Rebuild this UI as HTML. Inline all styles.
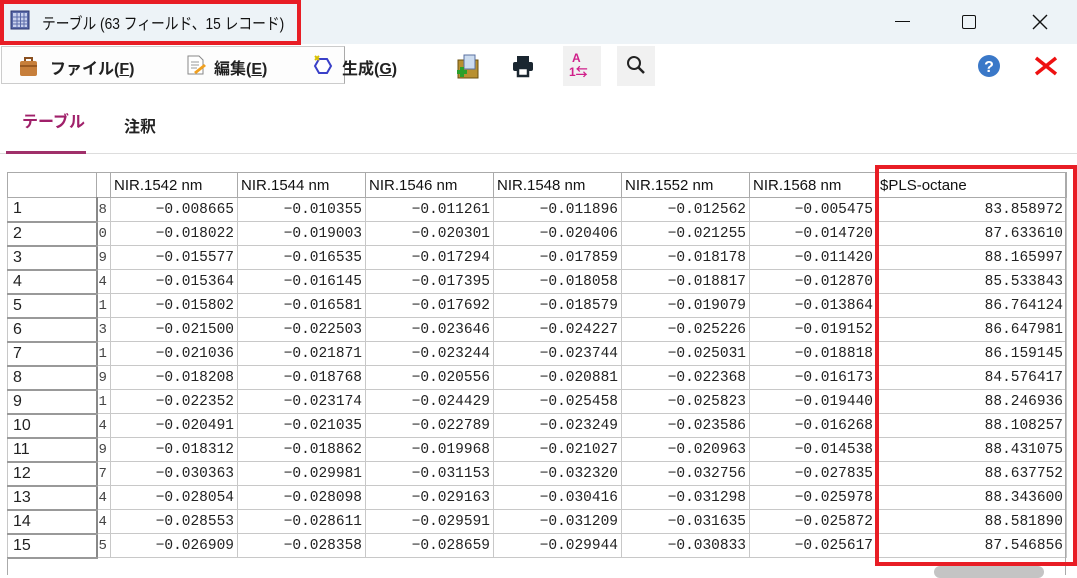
<!DOCTYPE html>
<html><head><meta charset="utf-8"><style>
*{margin:0;padding:0;box-sizing:border-box}
body{width:1077px;height:575px;overflow:hidden;background:#fff;position:relative;font-family:"Liberation Sans","Noto Sans CJK JP",sans-serif}
.title{position:absolute;left:0;top:0;width:1077px;height:44px;background:#edf3f7}
.abs{position:absolute}
table{position:absolute;left:7px;top:172px;border-collapse:collapse;table-layout:fixed}
td{border:1px solid #c8c8c8;height:24px;font-family:"Liberation Mono",monospace;font-size:14.5px;color:#222;text-align:right;padding:0 3px;white-space:nowrap;overflow:hidden}
tr.h td{height:25px;font-family:"Liberation Sans",sans-serif;font-size:15px;text-align:left;color:#111;border-color:#aaa;padding:0 3px}
td.l{text-align:left;font-family:"Liberation Sans",sans-serif;font-size:16px;border-right:2px solid #888;border-bottom:2px solid #999;padding-left:5px}
td.s{text-align:left;padding:0 1px;font-size:14px;color:#444}
.rb{position:absolute;border:4px solid #e81d25}
</style></head><body>
<div class="title"></div>
<svg class="abs" style="left:10px;top:10px" width="20" height="20"><rect x="1" y="1" width="18" height="18" fill="#5a6aa8" stroke="#2b3470"/><rect x="3" y="3" width="14" height="14" fill="#c9d1ee"/><path d="M3 7H17M3 11H17M3 14H17M7 3V17M10.5 3V17M14 3V17" stroke="#5a6aa8"/></svg>
<div class="abs" style="left:42px;top:10px;font-size:16px;color:#111;transform:scaleX(0.86);transform-origin:0 0;white-space:nowrap">テーブル (63 フィールド、15 レコード)</div>
<div class="rb" style="left:0;top:0;width:301px;height:45px"></div>
<div class="abs" style="left:895px;top:21px;width:15px;height:1px;background:#111"></div>
<div class="abs" style="left:962px;top:15px;width:14px;height:14px;border:1.5px solid #111;border-radius:2px"></div>
<svg class="abs" style="left:1032px;top:14px" width="16" height="16"><path d="M1 1L15 15M15 1L1 15" stroke="#111" stroke-width="1.4"/></svg>
<div class="abs" style="left:1px;top:46px;width:344px;height:38px;border:1px solid #ccc;border-right-color:#aaa;background:#fdfdfd"></div>
<svg class="abs" style="left:17px;top:54px" width="24" height="24"><rect x="3" y="7" width="17" height="15" rx="2" fill="#c77f3b"/><path d="M8 7V4H15V7" stroke="#8a5020" fill="none" stroke-width="2"/><rect x="3" y="11" width="17" height="2" fill="#9a5a22"/></svg>
<div class="abs" style="left:50px;top:55px;font-size:16px;font-weight:bold;color:#222">ファイル(<u>F</u>)</div>
<svg class="abs" style="left:184px;top:53px" width="24" height="24"><path d="M4 3H15L19 7V21H4Z" fill="#fff" stroke="#888"/><path d="M7 9H15M7 12H15M7 15H13" stroke="#999"/><path d="M10 19L20 11L22 13L12 21Z" fill="#f0a020"/></svg>
<div class="abs" style="left:214px;top:55px;font-size:16px;font-weight:bold;color:#222">編集(<u>E</u>)</div>
<svg class="abs" style="left:311px;top:53px" width="24" height="24"><path d="M8 6H16L20 13L16 20H8L4 13Z" fill="#fff" stroke="#3a40c8" stroke-width="2"/><path d="M4 3L8 7M8 3L4 7" stroke="#d8c000" stroke-width="2"/></svg>
<div class="abs" style="left:342px;top:55px;font-size:16px;font-weight:bold;color:#222">生成(<u>G</u>)</div>
<svg class="abs" style="left:456px;top:54px" width="24" height="26"><rect x="2" y="6" width="20" height="18" fill="#b89030" stroke="#6a5010"/><rect x="8" y="1" width="11" height="14" fill="#ccdcf0" stroke="#5a70a0"/><path d="M6 13V23M1 18H11" stroke="#2aa02a" stroke-width="4"/></svg>
<svg class="abs" style="left:511px;top:54px" width="24" height="24"><rect x="6" y="2" width="12" height="6" fill="#1a2630"/><rect x="2" y="8" width="20" height="9" rx="2" fill="#1a2630"/><rect x="7" y="14" width="10" height="8" fill="#fff" stroke="#1a2630" stroke-width="2.5"/></svg>
<div class="abs" style="left:563px;top:46px;width:38px;height:40px;background:#f1f1f1"></div>
<div class="abs" style="left:572px;top:51px;font-size:12px;font-weight:bold;color:#d0208a">A</div>
<div class="abs" style="left:569px;top:63px;font-size:12px;font-weight:bold;color:#d0208a">1⇆</div>
<div class="abs" style="left:617px;top:46px;width:38px;height:40px;background:#f1f1f1"></div>
<svg class="abs" style="left:625px;top:54px" width="24" height="24"><circle cx="9" cy="9" r="6" fill="none" stroke="#222" stroke-width="2"/><path d="M13 13L19 19" stroke="#222" stroke-width="2.5"/></svg>
<svg class="abs" style="left:977px;top:54px" width="24" height="24"><circle cx="12" cy="12" r="11" fill="#3a78c8"/><text x="12" y="18" font-size="16" font-weight="bold" fill="#fff" text-anchor="middle" font-family="Liberation Sans">?</text></svg>
<svg class="abs" style="left:1034px;top:56px" width="24" height="20"><path d="M2 2L22 18M22 2L2 18" stroke="#ee1111" stroke-width="3.5"/></svg>
<div class="abs" style="left:22px;top:108px;font-size:16px;font-weight:bold;color:#a0206a">テーブル</div>
<div class="abs" style="left:124px;top:113px;font-size:16px;font-weight:bold;color:#222">注釈</div>
<div class="abs" style="left:0;top:153px;width:1077px;height:1px;background:#ddd"></div>
<div class="abs" style="left:6px;top:151px;width:80px;height:3px;background:#a0306a"></div>
<table>
<colgroup><col style="width:89px"><col style="width:14px"><col style="width:127px"><col style="width:128px"><col style="width:128px"><col style="width:128px"><col style="width:128px"><col style="width:127px"><col style="width:190px"></colgroup>
<tr class="h"><td></td><td></td><td>NIR.1542 nm</td><td>NIR.1544 nm</td><td>NIR.1546 nm</td><td>NIR.1548 nm</td><td>NIR.1552 nm</td><td>NIR.1568 nm</td><td>$PLS-octane</td></tr>
<tr><td class="l">1</td><td class="s">8</td><td>−0.008665</td><td>−0.010355</td><td>−0.011261</td><td>−0.011896</td><td>−0.012562</td><td>−0.005475</td><td>83.858972</td></tr>
<tr><td class="l">2</td><td class="s">0</td><td>−0.018022</td><td>−0.019003</td><td>−0.020301</td><td>−0.020406</td><td>−0.021255</td><td>−0.014720</td><td>87.633610</td></tr>
<tr><td class="l">3</td><td class="s">9</td><td>−0.015577</td><td>−0.016535</td><td>−0.017294</td><td>−0.017859</td><td>−0.018178</td><td>−0.011420</td><td>88.165997</td></tr>
<tr><td class="l">4</td><td class="s">4</td><td>−0.015364</td><td>−0.016145</td><td>−0.017395</td><td>−0.018058</td><td>−0.018817</td><td>−0.012870</td><td>85.533843</td></tr>
<tr><td class="l">5</td><td class="s">1</td><td>−0.015802</td><td>−0.016581</td><td>−0.017692</td><td>−0.018579</td><td>−0.019079</td><td>−0.013864</td><td>86.764124</td></tr>
<tr><td class="l">6</td><td class="s">3</td><td>−0.021500</td><td>−0.022503</td><td>−0.023646</td><td>−0.024227</td><td>−0.025226</td><td>−0.019152</td><td>86.647981</td></tr>
<tr><td class="l">7</td><td class="s">1</td><td>−0.021036</td><td>−0.021871</td><td>−0.023244</td><td>−0.023744</td><td>−0.025031</td><td>−0.018818</td><td>86.159145</td></tr>
<tr><td class="l">8</td><td class="s">9</td><td>−0.018208</td><td>−0.018768</td><td>−0.020556</td><td>−0.020881</td><td>−0.022368</td><td>−0.016173</td><td>84.576417</td></tr>
<tr><td class="l">9</td><td class="s">1</td><td>−0.022352</td><td>−0.023174</td><td>−0.024429</td><td>−0.025458</td><td>−0.025823</td><td>−0.019440</td><td>88.246936</td></tr>
<tr><td class="l">10</td><td class="s">4</td><td>−0.020491</td><td>−0.021035</td><td>−0.022789</td><td>−0.023249</td><td>−0.023586</td><td>−0.016268</td><td>88.108257</td></tr>
<tr><td class="l">11</td><td class="s">9</td><td>−0.018312</td><td>−0.018862</td><td>−0.019968</td><td>−0.021027</td><td>−0.020963</td><td>−0.014538</td><td>88.431075</td></tr>
<tr><td class="l">12</td><td class="s">7</td><td>−0.030363</td><td>−0.029981</td><td>−0.031153</td><td>−0.032320</td><td>−0.032756</td><td>−0.027835</td><td>88.637752</td></tr>
<tr><td class="l">13</td><td class="s">4</td><td>−0.028054</td><td>−0.028098</td><td>−0.029163</td><td>−0.030416</td><td>−0.031298</td><td>−0.025978</td><td>88.343600</td></tr>
<tr><td class="l">14</td><td class="s">4</td><td>−0.028553</td><td>−0.028611</td><td>−0.029591</td><td>−0.031209</td><td>−0.031635</td><td>−0.025872</td><td>88.581890</td></tr>
<tr><td class="l">15</td><td class="s">5</td><td>−0.026909</td><td>−0.028358</td><td>−0.028659</td><td>−0.029944</td><td>−0.030833</td><td>−0.025617</td><td>87.546856</td></tr>
</table>
<div class="abs" style="left:7px;top:558px;width:1px;height:17px;background:#aaa"></div>
<div class="abs" style="left:1065px;top:172px;width:1px;height:403px;background:#aaa"></div>
<div class="abs" style="left:934px;top:566px;width:110px;height:12px;border-radius:6px;background:#c4c4c4"></div>
<div class="rb" style="left:875px;top:165px;width:202px;height:401px"></div>
</body></html>
